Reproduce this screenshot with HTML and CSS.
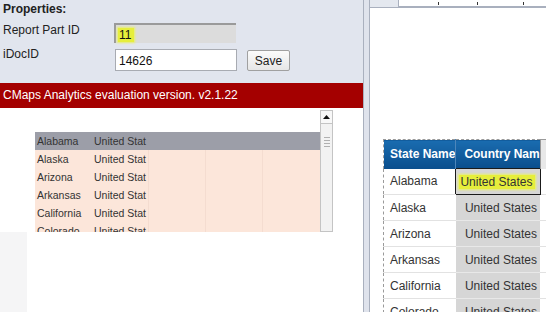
FILE: index.html
```html
<!DOCTYPE html>
<html lang="en">
<head>
    <meta charset="UTF-8">
    <meta name="viewport" content="width=device-width, initial-scale=1.0">
    <title>Report Part Properties</title>
    <link rel="stylesheet" href="styles.css">
</head>
<body>

    <div class="app">
        <div class="left">
            <div class="props">
                <div class="props-title">Properties:</div>
                <div class="field-row first">
                    <label class="field-label">Report Part ID</label>
                    <div class="field-input disabled"><span class="marker">11</span></div>
                </div>
                <div class="field-row second">
                    <label class="field-label">iDocID</label>
                    <div class="field-input">14626</div>
                    <button class="save-btn">Save</button>
                </div>
            </div>

            <div class="banner">CMaps Analytics evaluation version. v2.1.22</div>

            <div class="preview">
                <div class="grid-wrap">
                    <div class="grid">
                        <div class="grid-head"></div>
                        <div class="grid-row selected"><span class="c1">Alabama</span><span class="c2">United Stat</span><span class="c3"></span><span class="c4"></span><span class="c5"></span></div>
                        <div class="grid-row"><span class="c1">Alaska</span><span class="c2">United Stat</span><span class="c3"></span><span class="c4"></span><span class="c5"></span></div>
                        <div class="grid-row"><span class="c1">Arizona</span><span class="c2">United Stat</span><span class="c3"></span><span class="c4"></span><span class="c5"></span></div>
                        <div class="grid-row"><span class="c1">Arkansas</span><span class="c2">United Stat</span><span class="c3"></span><span class="c4"></span><span class="c5"></span></div>
                        <div class="grid-row"><span class="c1">California</span><span class="c2">United Stat</span><span class="c3"></span><span class="c4"></span><span class="c5"></span></div>
                        <div class="grid-row"><span class="c1">Colorado</span><span class="c2">United Stat</span><span class="c3"></span><span class="c4"></span><span class="c5"></span></div>
                    </div>
                    <div class="vscroll">
                        <div class="vscroll-up">
                            <svg width="7" height="4" viewBox="0 0 7 4"><path d="M0 4 L3.5 0 L7 4 Z" fill="#111"/></svg>
                        </div>
                        <div class="vscroll-thumb">
                            <div class="grip"></div>
                            <div class="grip"></div>
                            <div class="grip"></div>
                            <div class="grip"></div>
                        </div>
                    </div>
                </div>
                <div class="blank"><div class="blank-inner"></div></div>
            </div>
        </div>

        <div class="splitter"></div>

        <div class="right">
            <div class="toolbar">
                <div class="tool-box">
                    <span class="tick t1"></span>
                    <span class="tick t2"></span>
                    <span class="tick t3"></span>
                </div>
            </div>
            <div class="canvas">
                <table class="report">
                    <thead>
                        <tr><th class="col-state">State Name</th><th class="col-country">Country Nam</th><th class="col-more"></th></tr>
                    </thead>
                    <tbody>
                        <tr><td>Alabama</td><td class="country picked"><span class="marker">United States</span></td><td></td></tr>
                        <tr><td>Alaska</td><td class="country">United States</td><td></td></tr>
                        <tr><td>Arizona</td><td class="country">United States</td><td></td></tr>
                        <tr><td>Arkansas</td><td class="country">United States</td><td></td></tr>
                        <tr><td>California</td><td class="country">United States</td><td></td></tr>
                        <tr><td>Colorado</td><td class="country">United States</td><td></td></tr>
                    </tbody>
                </table>
            </div>
        </div>
    </div>

</body>
</html>
```

FILE: styles.css
```css
body {
    font-family: 'Liberation Sans', Arial, sans-serif;
    margin: 0;
    padding: 0;
    background: #fff;
    color: #222;
    overflow: hidden;
}

.app {
    display: flex;
    width: 546px;
    height: 312px;
    overflow: hidden;
}

/* left side: properties + preview */

.left {
    width: 363px;
    display: flex;
    flex-direction: column;
}

.props {
    height: 83px;
    flex-shrink: 0;
    box-sizing: border-box;
    padding: 1px 3px 0;
    background: #e1e5ee;
}

.props-title {
    font-size: 12px;
    font-weight: bold;
    line-height: 16px;
    color: #222;
}

.field-row {
    display: flex;
    align-items: flex-start;
}

.field-row.first {
    margin-top: 5px;
}

.field-row.second {
    margin-top: 3px;
}

.field-label {
    width: 111px;
    font-size: 12px;
    line-height: 16px;
    color: #222;
}

.field-input {
    width: 122px;
    box-sizing: border-box;
    font-size: 12px;
    color: #111;
}

.first .field-input {
    margin-top: 1px;
    height: 20px;
    padding: 3px 0 0 2px;
    background: #dcdcdc;
    border-top: 2px solid #9a9a9a;
    border-left: 2px solid #9a9a9a;
}

.second .field-input {
    margin-top: 3px;
    margin-left: 1px;
    height: 22px;
    padding: 4px 0 0 3px;
    background: #fff;
    border: 1px solid #a8abb2;
}

.save-btn {
    margin: 4px 0 0 10px;
    width: 43px;
    height: 21px;
    padding: 0;
    font-family: 'Liberation Sans', Arial, sans-serif;
    font-size: 12px;
    color: #222;
    background: linear-gradient(to bottom, #fbfbfb, #e6e6e6);
    border: 1px solid #a0a0a0;
    border-radius: 2px;
}

.marker {
    background: #e6ee3c;
    box-shadow: 0 0 2px 1px #eaf06a;
    padding: 0 3px 0 1px;
}

.banner {
    height: 25px;
    flex-shrink: 0;
    box-sizing: border-box;
    padding: 4px 0 0 3px;
    background: #a40000;
    color: #fff;
    font-size: 12px;
    line-height: 16px;
}

.preview {
    height: 204px;
    background: #fff;
}

.grid-wrap {
    display: flex;
    margin: 2px 0 0 35px;
    width: 298px;
    height: 122px;
    overflow: hidden;
}

.grid {
    width: 285px;
}

.grid-head {
    height: 22px;
    background: #fff;
}

.grid-row {
    display: flex;
    height: 18px;
    background: #fce6da;
    font-size: 10.5px;
    line-height: 18px;
    color: #333;
}

.grid-row.selected {
    background: #9c9ea8;
}

.grid-row span {
    box-sizing: border-box;
    white-space: nowrap;
}

.c1 { width: 56px; padding-left: 2px; }
.c2 { width: 57px; padding-left: 3px; }
.c3 { width: 57px; border-left: 1px solid #f4dcd0; }
.c4 { width: 57px; border-left: 1px solid #f4dcd0; }
.c5 { width: 58px; border-left: 1px solid #f4dcd0; }

.selected .c3,
.selected .c4,
.selected .c5 {
    border-left-color: #9c9ea8;
}

.vscroll {
    width: 13px;
    box-sizing: border-box;
    border: 1px solid #c4c4c4;
    background: #f4f4f4;
    display: flex;
    flex-direction: column;
}

.vscroll-up {
    height: 12px;
    display: flex;
    align-items: center;
    justify-content: center;
    border-bottom: 1px solid #c4c4c4;
    background: #f8f8f8;
}

.vscroll-thumb {
    flex: 1;
    padding-top: 13px;
    background: #f2f2f2;
    display: flex;
    flex-direction: column;
    align-items: center;
    gap: 2px;
}

.grip {
    width: 6px;
    height: 1px;
    background: #b0b0b0;
}

.blank {
    height: 80px;
    background: #f5f5f6;
    display: flex;
}

.blank-inner {
    flex: 1;
    margin-left: 27px;
    background: #fff;
}

/* splitter */

.splitter {
    width: 5px;
    background: #dfe3ec;
    border-left: 1px solid #a9b0be;
    border-right: 1px solid #a9b0be;
}

/* right side: report canvas */

.right {
    flex: 1;
    display: flex;
    flex-direction: column;
    overflow: hidden;
    background: #fff;
}

.toolbar {
    height: 7px;
    flex-shrink: 0;
    background: #e4e8ef;
    border-bottom: 1px solid #a9b0be;
    padding-left: 28px;
}

.tool-box {
    position: relative;
    height: 6px;
    background: #fff;
    border: 1px solid #a9b0be;
    border-top: none;
    border-right: none;
}

.tick {
    position: absolute;
    bottom: 1px;
    width: 1px;
    height: 3px;
    background: #333;
}

.t1 { left: 39px; }
.t2 { left: 78px; }
.t3 { left: 124px; }

.canvas {
    flex: 1;
    padding: 131px 0 0 13px;
}

.report {
    border-collapse: collapse;
    table-layout: fixed;
    border-top: 1px dashed #9a9a9a;
    border-left: 1px dashed #9a9a9a;
    font-size: 12px;
}

.report th {
    height: 29px;
    padding: 0 0 0 6px;
    box-sizing: border-box;
    text-align: left;
    font-weight: bold;
    color: #fff;
    background: linear-gradient(to bottom, #1a6cb0, #0a4e8c);
    white-space: nowrap;
    overflow: hidden;
}

.report .col-state {
    width: 78px;
    border-right: 1px solid #4d86ba;
}

.report .col-country {
    width: 81px;
    padding-left: 8px;
}

.report .col-more {
    width: 10px;
    background: #e8e8e8;
    border-left: 1px solid #999;
}

.report td {
    height: 26px;
    padding: 0 0 0 6px;
    box-sizing: border-box;
    color: #333;
    background: #fff;
    border-bottom: 1px solid #e2e2e2;
    white-space: nowrap;
    overflow: hidden;
}

.report td.country {
    padding-left: 9px;
    background: #d6d6d6;
    border-bottom-color: #e8e8e8;
}

.report td.picked {
    border: 1px solid #1a1a1a;
    padding-left: 3px;
}
```
